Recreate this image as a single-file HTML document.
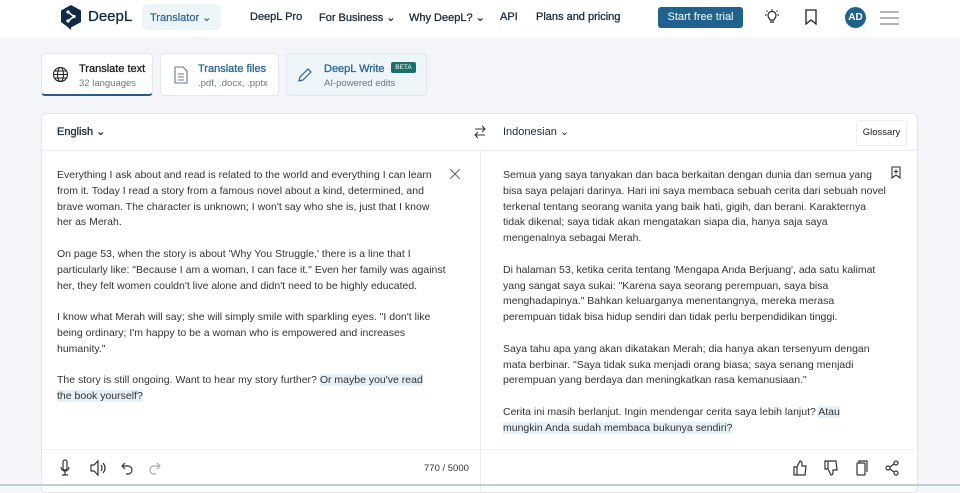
<!DOCTYPE html>
<html><head><meta charset="utf-8"><style>
*{box-sizing:border-box;margin:0;padding:0}
body{width:960px;height:486px;overflow:hidden;background:#f3f5f8;font-family:"Liberation Sans",sans-serif;color:#1a1a1a;position:relative}
.nav{position:absolute;left:0;top:0;width:960px;height:37px;background:#fff}
.nav span{position:absolute;top:11px;font-size:11px;color:#1b2a3a;-webkit-text-stroke:0.3px #1b2a3a}
.pill{position:absolute;left:142px;top:4px;width:79px;height:26px;background:#eef5f9;border-radius:5px}
.tab{position:absolute;top:53px;height:43px;background:#fff;border-radius:4px;border:1px solid #e3e7ec}
.tab b{position:absolute;left:37px;top:9px;font-size:11px;font-weight:normal;-webkit-text-stroke:0.3px currentColor}
.tab i{position:absolute;left:37px;top:24px;font-size:9.5px;font-style:normal;color:#6b7785}
.panel{position:absolute;left:41px;top:113px;width:877px;height:380px;background:#fff;border:1px solid #e3e7ec;border-radius:6px}
.txt{position:absolute;font-size:10.5px;line-height:15.8px;color:#333;white-space:nowrap}
.hl{background:#e6f0f7}
svg{position:absolute}
</style></head><body>
<div class="nav">
<svg style="left:60px;top:4px" width="22" height="26" viewBox="0 0 22 26"><path d="M11 1L21 6.5V18L11 23.5V26L7 22.5L1 18V6.5Z" fill="#0f2b46"/><path d="M8 8L14 12.5L8 17" stroke="#fff" stroke-width="1.6" fill="none"/><circle cx="8" cy="8" r="1.6" fill="#fff"/><circle cx="8" cy="17" r="1.6" fill="#fff"/><circle cx="14" cy="12.5" r="1.6" fill="#fff"/></svg>
<span style="left:88px;top:8px;font-size:15px;color:#0f2b46">DeepL</span>
<div class="pill"></div>
<span style="left:150px;color:#2a6593;-webkit-text-stroke:0.2px #2a6593">Translator ⌄</span>
<span style="left:250px">DeepL Pro</span>
<span style="left:319px">For Business ⌄</span>
<span style="left:409px">Why DeepL? ⌄</span>
<span style="left:500px">API</span>
<span style="left:536px">Plans and pricing</span>
<div style="position:absolute;left:658px;top:7px;width:85px;height:21px;background:#1f628e;border-radius:3px;color:#fff;font-size:11px;text-align:center;line-height:21px">Start free trial</div>
<svg style="left:763px;top:8px" width="18" height="18" viewBox="0 0 18 18" fill="none" stroke="#222" stroke-width="1.2"><path d="M6 10a4 4 0 1 1 6 0l-1 2H7z"/><path d="M7 14h4M9 1v1.5M2 7h1.5M14.5 7H16M3.5 2.5l1 1M14.5 2.5l-1 1"/></svg>
<svg style="left:804px;top:9px" width="14" height="16" viewBox="0 0 14 16" fill="none" stroke="#222" stroke-width="1.3"><path d="M2 1h10v14l-5-4-5 4z"/></svg>
<div style="position:absolute;left:845px;top:7px;width:21px;height:21px;border-radius:50%;background:#1f628e;color:#fff;font-size:10px;font-weight:bold;text-align:center;line-height:21px">AD</div>
<svg style="left:880px;top:11px" width="19" height="14"><path d="M0 1h19M0 7h19M0 13h19" stroke="#888" stroke-width="1.2"/></svg>
</div>

<div class="tab" style="left:41px;width:112px;border-bottom:2px solid #1f628e">
<svg style="left:10px;top:12px" width="17" height="17" viewBox="0 0 17 17" fill="none" stroke="#222" stroke-width="1.1"><circle cx="8.5" cy="8.5" r="7"/><ellipse cx="8.5" cy="8.5" rx="3" ry="7"/><path d="M1.5 8.5h14M2.5 5h12M2.5 12h12"/></svg>
<b>Translate text</b><i>32 languages</i></div>
<div class="tab" style="left:160px;width:119px">
<svg style="left:13px;top:12px" width="14" height="18" viewBox="0 0 14 18" fill="none" stroke="#6b7785" stroke-width="1.1"><path d="M1 1h8l4 4v12H1z"/><path d="M4 8h6M4 11h6M4 14h6"/></svg>
<b style="color:#2a6593">Translate files</b><i>.pdf, .docx, .pptx</i></div>
<div class="tab" style="left:286px;width:141px;background:#eef5f9">
<svg style="left:10px;top:13px" width="16" height="16" viewBox="0 0 16 16" fill="none" stroke="#2a6593" stroke-width="1.2"><path d="M2 14l1-4 8-8 3 3-8 8z"/></svg>
<b style="color:#2a6593">DeepL Write</b><i>AI-powered edits</i>
<div style="position:absolute;left:104px;top:8px;width:25px;height:11px;background:#1e6e6a;color:#fff;font-size:6.5px;text-align:center;line-height:11px;border-radius:2px">BETA</div></div>

<div class="panel">
<div style="position:absolute;left:0;top:36px;width:875px;border-top:1px solid #e8ebef"></div>
<div style="position:absolute;left:438px;top:37px;height:340px;border-left:1px solid #e8ebef"></div>
<div style="position:absolute;left:0;top:335px;width:875px;border-top:1px solid #eef0f3"></div>
<span class="txt" style="left:15px;top:11px;font-size:11px;color:#1b2a3a;-webkit-text-stroke:0.3px #1b2a3a">English ⌄</span>
<svg style="left:431px;top:11px" width="14" height="14" viewBox="0 0 14 14" fill="none" stroke="#333" stroke-width="1.1"><path d="M2 4h10M9 1l3 3-3 3M12 10H2M5 7l-3 3 3 3"/></svg>
<span class="txt" style="left:461px;top:11px;font-size:11px;color:#1b2a3a">Indonesian ⌄</span>
<div style="position:absolute;left:814px;top:6px;width:51px;height:26px;border:1px solid #eceff2;border-radius:3px;font-size:9.5px;text-align:center;line-height:24px">Glossary</div>
<div class="txt" style="left:15px;top:54px">Everything I ask about and read is related to the world and everything I can learn<br>from it. Today I read a story from a famous novel about a kind, determined, and<br>brave woman. The character is unknown; I won't say who she is, just that I know<br>her as Merah.<br><br>On page 53, when the story is about 'Why You Struggle,' there is a line that I<br>particularly like: "Because I am a woman, I can face it." Even her family was against<br>her, they felt women couldn't live alone and didn't need to be highly educated.<br><br>I know what Merah will say; she will simply smile with sparkling eyes. "I don't like<br>being ordinary; I'm happy to be a woman who is empowered and increases<br>humanity."<br><br>The story is still ongoing. Want to hear my story further? <span class="hl">Or maybe you've read</span><br><span class="hl">the book yourself?</span></div>
<svg style="left:408px;top:55px" width="10" height="10"><path d="M0 0L10 10M10 0L0 10" stroke="#666" stroke-width="1.1"/></svg>
<div class="txt" style="left:461px;top:54px">Semua yang saya tanyakan dan baca berkaitan dengan dunia dan semua yang<br>bisa saya pelajari darinya. Hari ini saya membaca sebuah cerita dari sebuah novel<br>terkenal tentang seorang wanita yang baik hati, gigih, dan berani. Karakternya<br>tidak dikenal; saya tidak akan mengatakan siapa dia, hanya saja saya<br>mengenalnya sebagai Merah.<br><br>Di halaman 53, ketika cerita tentang 'Mengapa Anda Berjuang', ada satu kalimat<br>yang sangat saya sukai: "Karena saya seorang perempuan, saya bisa<br>menghadapinya." Bahkan keluarganya menentangnya, mereka merasa<br>perempuan tidak bisa hidup sendiri dan tidak perlu berpendidikan tinggi.<br><br>Saya tahu apa yang akan dikatakan Merah; dia hanya akan tersenyum dengan<br>mata berbinar. "Saya tidak suka menjadi orang biasa; saya senang menjadi<br>perempuan yang berdaya dan meningkatkan rasa kemanusiaan."<br><br>Cerita ini masih berlanjut. Ingin mendengar cerita saya lebih lanjut? <span class="hl">Atau</span><br><span class="hl">mungkin Anda sudah membaca bukunya sendiri?</span></div>
<svg style="left:849px;top:52px" width="10" height="13" viewBox="0 0 10 13" fill="none" stroke="#333" stroke-width="1.1"><path d="M1 1h8v11L5 9 1 12z"/><path d="M5 3.5v4M3 5.5h4"/></svg>
<span class="txt" style="left:382px;top:347px;font-size:9.5px">770 / 5000</span>
<svg style="left:17px;top:345px" width="140" height="18" viewBox="0 0 140 18" fill="none" stroke="#333" stroke-width="1.2"><rect x="4" y="1" width="4" height="10" rx="2"/><path d="M2 8a4 4 0 0 0 8 0M6 12v4M3 16h6"/><path d="M32 6h3l4-4v14l-4-4h-3zM42 6q2 3 0 6M44 4q4 5 0 10"/><path d="M66 4l-3 3 3 3M63 7h6a4 4 0 0 1 0 8h-2"/><path stroke="#aaa" d="M98 4l3 3-3 3M101 7h-6a4 4 0 0 0 0 8h2"/></svg>
<svg style="left:750px;top:345px" width="115" height="18" viewBox="0 0 115 18" fill="none" stroke="#333" stroke-width="1.2"><path d="M2 8h3v8H2zM5 8l3-6q2 0 2 3v2h4l-1 9H5"/><path d="M33 10h3V2h-3zM36 10l3 6q2 0 2-3v-2h4l-1-9h-8"/><rect x="65" y="4" width="8" height="12" rx="1"/><path d="M67 4V2h8v11"/><circle cx="96" cy="9" r="2"/><circle cx="104" cy="4" r="2"/><circle cx="104" cy="14" r="2"/><path d="M98 8l4-3M98 10l4 3"/></svg>
</div>
<div style="position:absolute;left:0;top:484px;width:960px;height:2px;background:#b7d3d8"></div>
</body></html>
